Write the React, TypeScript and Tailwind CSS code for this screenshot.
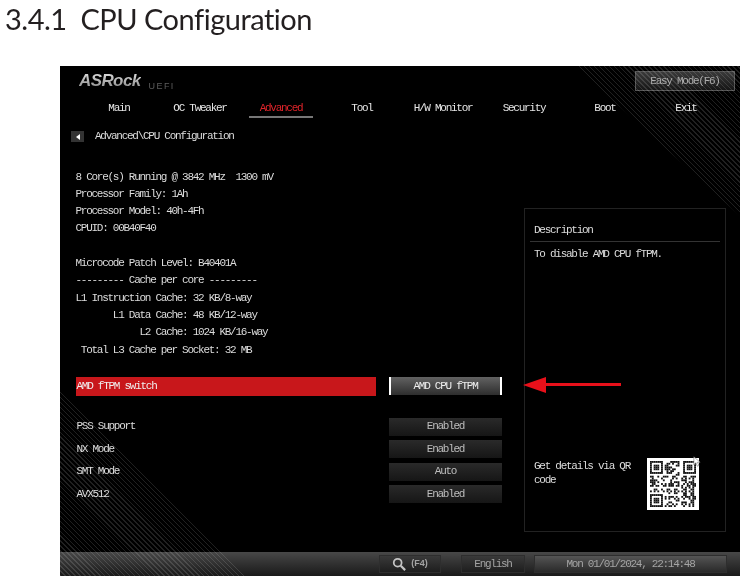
const INFO_LINES = [
  "8 Core(s) Running @ 3842 MHz  1300 mV",
  "Processor Family: 1Ah",
  "Processor Model: 40h-4Fh",
  "CPUID: 00B40F40",
  " ",
  "Microcode Patch Level: B40401A",
  "--------- Cache per core ---------",
  "L1 Instruction Cache: 32 KB/8-way",
  "       L1 Data Cache: 48 KB/12-way",
  "            L2 Cache: 1024 KB/16-way",
  " Total L3 Cache per Socket: 32 MB",
];

const TABS = ["Main", "OC Tweaker", "Advanced", "Tool", "H/W Monitor", "Security", "Boot", "Exit"];

const OPTIONS = [
  { label: "PSS Support", value: "Enabled" },
  { label: "NX Mode", value: "Enabled" },
  { label: "SMT Mode", value: "Auto" },
  { label: "AVX512", value: "Enabled" },
];

// rough QR pattern, 25 modules a side
const qrCell = (x: number, y: number) => {
  const finder = (fx: number, fy: number) => {
    const dx = x - fx;
    const dy = y - fy;
    if (dx < -1 || dy < -1 || dx > 7 || dy > 7) return null;
    if (dx < 0 || dy < 0 || dx > 6 || dy > 6) return false;
    if (dx === 0 || dy === 0 || dx === 6 || dy === 6) return true;
    return dx >= 2 && dx <= 4 && dy >= 2 && dy <= 4;
  };
  for (const [fx, fy] of [[0, 0], [18, 0], [0, 18]]) {
    const hit = finder(fx, fy);
    if (hit !== null) return hit;
  }
  return ((x * 7 + y * 13 + x * y * 3 + ((x ^ y) * 5)) % 11) < 5;
};

const QrCode = () => {
  const cells: [number, number][] = [];
  for (let y = 0; y < 25; y++) {
    for (let x = 0; x < 25; x++) {
      if (qrCell(x, y)) cells.push([x, y]);
    }
  }
  return (
    <div className="relative w-[52px] h-[52px] bg-white p-[3px] shrink-0">
      <svg viewBox="0 0 25 25" className="w-[46px] h-[46px] block">
        {cells.map(([x, y]) => (
          <rect key={`${x}-${y}`} x={x} y={y} width="1" height="1" fill="#111" />
        ))}
      </svg>
      {/* mouse cursor sitting on the corner */}
      <svg viewBox="0 0 10 14" className="absolute -top-[2px] -right-[2px] w-[8px] h-[11px]">
        <path d="M1 1 L1 11 L3.5 8.5 L5.5 13 L7.5 12 L5.5 8 L9 8 Z" fill="#fff" stroke="#777" strokeWidth="0.8" />
      </svg>
    </div>
  );
};

const ValueButton = ({ children }: { children: string }) => (
  <div className="w-[113px] h-[18px] flex items-center justify-center bg-gradient-to-b from-[#2a2a2a] to-[#161616] text-[#bdbdbd]">
    {children}
  </div>
);

const FooterButton = ({ className, children }: { className: string; children: React.ReactNode }) => (
  <div className={`h-[18px] flex items-center justify-center gap-[5px] border border-[#2e2e2e] text-[#a4a4a4] ${className}`}>
    {children}
  </div>
);

export default function App() {
  return (
    <div className="w-[745px] h-[582px] bg-white overflow-hidden">
      <h1 className="h-[66px] pl-[5px] text-[29px] leading-[37px] tracking-[-0.5px] text-[#231f20] whitespace-pre font-['Lato',sans-serif]">
        3.4.1  CPU Configuration
      </h1>

      <div className="relative ml-[60px] w-[680px] h-[510px] bg-black flex flex-col overflow-hidden text-[11px] text-[#dcdcdc] font-['Liberation_Mono',monospace] tracking-[-1.27px]">
        {/* logo row */}
        <div className="relative h-[30px] flex justify-between pl-[19px] pr-[5px] pt-[5px] shrink-0">
          <div className="flex items-start">
            <span className="text-[17px] leading-[20px] italic font-bold tracking-[-0.6px] bg-gradient-to-b from-[#e8e8e8] to-[#808080] bg-clip-text text-transparent font-['Liberation_Sans',sans-serif]">ASRock</span>
            <span className="ml-[8px] mt-[10px] text-[9px] leading-[10px] tracking-[1.4px] text-[#5c5c5c] font-['Liberation_Sans',sans-serif]">UEFI</span>
          </div>
          <div className="w-[100px] h-[20px] flex items-center justify-center border border-[#555] bg-gradient-to-b from-[#3a3a3a] to-[#161616] text-[#a8a8a8]">
            Easy Mode(F6)
          </div>
        </div>

        {/* tabs */}
        <div className="relative h-[23px] pl-[18.5px] flex shrink-0">
          {TABS.map((tab) => (
            <div key={tab} className="w-[81px] flex justify-center">
              {tab === "Advanced" ? (
                <div className="w-[64px] h-[22px] pt-[6px] text-center leading-[12px] text-[#e0242a] border-b-[2px] border-[#777]">{tab}</div>
              ) : (
                <div className="pt-[6px] leading-[12px] text-[#e6e6e6]">{tab}</div>
              )}
            </div>
          ))}
        </div>

        {/* breadcrumb */}
        <div className="relative h-[26px] pt-[12px] pl-[11px] flex items-start shrink-0">
          <div className="w-[13px] h-[11px] bg-[#333] flex items-center justify-center">
            <div className="w-0 h-0 border-y-[3px] border-y-transparent border-r-[4px] border-r-white" />
          </div>
          <span className="ml-[11px] leading-[11px]">Advanced\CPU Configuration</span>
        </div>

        {/* main area */}
        <div className="relative flex-1 flex min-h-0">
          <div className="w-[464px] pl-[15.5px] shrink-0">
            <div className="pt-[23.5px]">
              {INFO_LINES.map((line, i) => (
                <div key={i} className="h-[17.33px] leading-[17.33px] whitespace-pre">{line}</div>
              ))}
            </div>

            <div className="mt-[17.5px] flex items-center">
              <div className="w-[300.5px] h-[19px] bg-[#c8171b] pl-[1px] leading-[18px] text-[#f0f0f0]">AMD fTPM switch</div>
              <div className="ml-[13px] w-[113px] h-[18px] flex items-center justify-center border-x-2 border-x-white bg-gradient-to-b from-[#626262] to-[#2e2e2e] text-[#eee]">
                AMD CPU fTPM
              </div>
            </div>

            <div className="mt-[22px] flex flex-col gap-[4.5px]">
              {OPTIONS.map((opt) => (
                <div key={opt.label} className="flex items-center">
                  <div className="w-[313.5px] pl-[1px]">{opt.label}</div>
                  <ValueButton>{opt.value}</ValueButton>
                </div>
              ))}
            </div>
          </div>

          {/* description box */}
          <div className="mt-[63px] w-[202px] h-[324px] border border-[#222] bg-black flex flex-col relative">
            <div className="mx-[5px] h-[33px] pl-[4px] pt-[15px] leading-[12px] border-b border-[#333]">Description</div>
            <div className="pl-[9px] pt-[6px] leading-[12px]">To disable AMD CPU fTPM.</div>
            <div className="mt-auto mb-[21px] pl-[9px] pr-[26px] flex items-start justify-between">
              <div className="w-[105px] mt-[1px] leading-[14px]">Get details via QR code</div>
              <QrCode />
            </div>
          </div>

          {/* annotation arrow */}
          <svg viewBox="0 0 100 20" className="absolute left-[463px] top-[230px] w-[100px] h-[20px]">
            <path d="M0 10 L23 2 L23 8 L98 8 L98 11 L23 11 L23 18 Z" fill="#e8101a" />
          </svg>
        </div>

        {/* footer */}
        <div className="h-[24px] shrink-0 flex items-center bg-gradient-to-b from-[#484848] to-[#1a1a1a] pl-[319px]">
          <FooterButton className="w-[62px] bg-gradient-to-b from-[#3a3a3a] to-[#1e1e1e]">
            <svg viewBox="0 0 16 16" className="w-[14px] h-[14px]" fill="none" stroke="#c4c4c4" strokeWidth="2">
              <circle cx="6.5" cy="6.5" r="4.5" />
              <path d="M10 10 L15 15" strokeWidth="2.5" />
            </svg>
            <span className="text-[9px] font-bold tracking-normal font-['Liberation_Sans',sans-serif]">(F4)</span>
          </FooterButton>
          <FooterButton className="ml-[20px] w-[64px] bg-gradient-to-b from-[#3a3a3a] to-[#1e1e1e]">English</FooterButton>
          <FooterButton className="ml-[9px] w-[193px] bg-gradient-to-b from-[#555] to-[#2a2a2a]">Mon 01/01/2024, 22:14:48</FooterButton>
        </div>

        {/* diagonal hatch, top right and bottom left */}
        <div className="absolute right-0 top-0 w-[165px] h-[150px] pointer-events-none [clip-path:polygon(0_0,100%_0,100%_100%)] bg-[repeating-linear-gradient(45deg,#202020_0px,#202020_1px,transparent_1px,transparent_3.5px)] mix-blend-screen" />
        <div className="absolute left-0 bottom-0 w-[185px] h-[185px] pointer-events-none [clip-path:polygon(0_0,100%_100%,0_100%)] bg-[repeating-linear-gradient(45deg,#202020_0px,#202020_1px,transparent_1px,transparent_3.5px)] mix-blend-screen" />
      </div>
    </div>
  );
}
